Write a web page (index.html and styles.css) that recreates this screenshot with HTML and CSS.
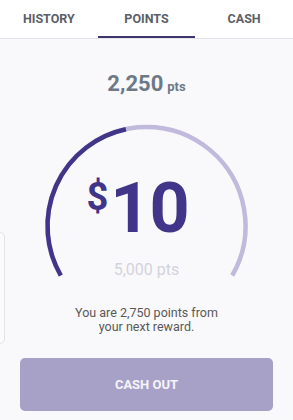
FILE: index.html
```html
<!DOCTYPE html>
<html>
<head>
<meta charset="utf-8">
<link rel="stylesheet" href="styles.css">
</head>
<body>
<div class="page">
  <nav class="tabs">
    <div class="tab">HISTORY</div>
    <div class="tab active">POINTS</div>
    <div class="tab">CASH</div>
  </nav>
  <div class="balance"><span class="balance-num">2,250</span> <span class="balance-unit">pts</span></div>
  <div class="gauge">
    <svg class="gauge-svg" width="293" height="170" viewBox="0 0 293 170">
      <path d="M60.8 155.5 A99 99 0 1 1 232.2 155.5" fill="none" stroke="#c1badc" stroke-width="4.5"/>
      <path d="M60.8 155.5 A99 99 0 0 1 125.9 9.2" fill="none" stroke="#41358a" stroke-width="4.5"/>
    </svg>
    <div class="gauge-labels">
      <div class="amount"><span class="dollar">$</span><span class="value">10</span></div>
      <div class="goal">5,000 pts</div>
    </div>
  </div>
  <p class="message">You are 2,750 points from<br>your next reward.</p>
  <button class="cashout">CASH OUT</button>
  <div class="side-card"></div>
</div>
</body>
</html>
```
FILE: styles.css
```css
html, body {
  margin: 0;
  padding: 0;
}
body {
  background: #f9f9fb;
  font-family: Roboto, "Liberation Sans", sans-serif;
  overflow: hidden;
}
.page {
  position: relative;
  width: 293px;
  height: 420px;
  display: flex;
  flex-direction: column;
}
.tabs {
  display: grid;
  grid-template-columns: 1fr 1fr 1fr;
  height: 38px;
  flex: none;
  background: #fff;
  border-bottom: 1px solid #e3e3e8;
}
.tab {
  display: flex;
  align-items: center;
  justify-content: center;
  font-size: 12.5px;
  font-weight: 700;
  color: #5b5f66;
  box-sizing: border-box;
  border-bottom: 2px solid transparent;
  padding-top: 1px;
}
.tab.active {
  border-bottom-color: #3e3470;
}
.balance {
  margin-top: 32px;
  text-align: center;
  height: 26px;
  line-height: 26px;
  flex: none;
  color: #6c7987;
  font-weight: 700;
}
.balance-num {
  font-size: 22px;
}
.balance-unit {
  font-size: 13px;
}
.gauge {
  margin-top: 23px;
  display: grid;
  height: 170px;
  flex: none;
}
.gauge-svg {
  grid-area: 1 / 1;
  display: block;
}
.gauge-labels {
  grid-area: 1 / 1;
  display: flex;
  flex-direction: column;
  align-items: center;
  padding-top: 56px;
}
.amount {
  display: flex;
  align-items: flex-start;
  color: #41358a;
  font-weight: 700;
  padding-right: 18px;
  white-space: nowrap;
}
.value {
  font-size: 70px;
  line-height: 64px;
  letter-spacing: -1px;
}
.dollar {
  font-size: 38px;
  line-height: 38px;
  margin-top: 2px;
  margin-right: 2px;
}
.goal {
  margin-top: 20px;
  font-size: 16px;
  color: #d3d3db;
  line-height: 20px;
}
.message {
  margin: 16px 0 0;
  flex: none;
  text-align: center;
  font-size: 12.5px;
  line-height: 14px;
  color: #585858;
}
.cashout {
  margin: 24px 20px 0;
  height: 53px;
  flex: none;
  border: none;
  border-radius: 5px;
  background: #a7a1c7;
  color: #f6f4fa;
  font-family: Roboto, "Liberation Sans", sans-serif;
  font-size: 13px;
  font-weight: 700;
}
.side-card {
  position: absolute;
  left: -200px;
  top: 232px;
  width: 203px;
  height: 110px;
  border: 1px solid #e2e2e7;
  border-radius: 5px;
  background: #fbfbfc;
}
```
